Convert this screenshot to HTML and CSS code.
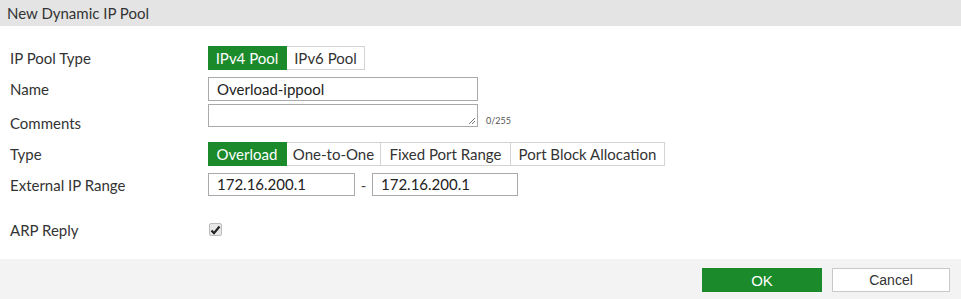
FILE: index.html
```html
<!DOCTYPE html>
<html>
<head>
<meta charset="utf-8">
<link rel="stylesheet" href="styles.css">
</head>
<body>
<div class="dialog">
  <div class="header">New Dynamic IP Pool</div>
  <div class="content">
    <div class="row r1">
      <div class="label">IP Pool Type</div>
      <div class="seg">
        <span class="opt active w79">IPv4 Pool</span><span class="opt w78">IPv6 Pool</span>
      </div>
    </div>
    <div class="row r2">
      <div class="label">Name</div>
      <div class="input wide">Overload-ippool</div>
    </div>
    <div class="row r3">
      <div class="label low">Comments</div>
      <div class="textarea wide">
        <svg class="grip" width="8" height="8" viewBox="0 0 8 8"><path d="M7 1 L1 7 M7 4 L4 7" stroke="#777" stroke-width="1"/></svg>
      </div>
      <span class="count">0/255</span>
    </div>
    <div class="row r4">
      <div class="label">Type</div>
      <div class="seg">
        <span class="opt active w79">Overload</span><span class="opt w94">One-to-One</span><span class="opt w130">Fixed Port Range</span><span class="opt w154">Port Block Allocation</span>
      </div>
    </div>
    <div class="row r5">
      <div class="label">External IP Range</div>
      <div class="input ip1">172.16.200.1</div>
      <span class="dash">-</span>
      <div class="input ip2">172.16.200.1</div>
    </div>
    <div class="row r6">
      <div class="label">ARP Reply</div>
      <div class="check">
        <svg width="11" height="10" viewBox="0 0 11 10"><path d="M1.5 5.5 L4 8.2 L9.5 1.5" fill="none" stroke="#222" stroke-width="2.2"/></svg>
      </div>
    </div>
  </div>
  <div class="footer">
    <button class="btn ok">OK</button>
    <button class="btn cancel">Cancel</button>
  </div>
</div>
</body>
</html>
```
FILE: styles.css
```css
* { box-sizing: border-box; }
html, body { margin: 0; padding: 0; background: #fff; }
body {
  font-family: Lato, "Open Sans", sans-serif;
  font-size: 15px;
  color: #222;
  width: 961px;
  height: 299px;
  overflow: hidden;
}
.dialog { display: flex; flex-direction: column; height: 299px; }
.header {
  height: 26px;
  background: #e4e4e4;
  padding-left: 7px;
  line-height: 26px;
  color: #333;
}
.content {
  flex: 1;
  padding-top: 20px;
}
.row { display: flex; align-items: center; }
.label { width: 208px; padding-left: 10px; color: #333; }
.label.low { margin-top: 14px; }
.r1 { height: 24px; margin-bottom: 7px; }
.r2 { height: 24px; margin-bottom: 3px; }
.r3 { height: 23px; margin-bottom: 15px; }
.r4 { height: 24px; margin-bottom: 7px; }
.r5 { height: 23px; margin-bottom: 27px; }
.r6 { height: 13px; }

.seg { display: flex; height: 24px; }
.opt {
  height: 24px;
  line-height: 22px;
  border: 1px solid #d4d4d4;
  border-left: none;
  text-align: center;
  color: #333;
  background: #fff;
}
.opt.active {
  background: #1b8a2b;
  border-color: #1b8a2b;
  color: #fff;
}
.w79 { width: 79px; }
.w78 { width: 78px; }
.w94 { width: 94px; }
.w130 { width: 130px; }
.w154 { width: 154px; }

.input {
  height: 24px;
  border: 1px solid #aaa;
  padding-left: 8px;
  line-height: 22px;
  color: #222;
}
.wide { width: 270px; }
.r5 .input { height: 23px; line-height: 21px; }
.textarea {
  position: relative;
  height: 23px;
  border: 1px solid #aaa;
}
.grip { position: absolute; right: 1px; bottom: 1px; }
.count { font-size: 9px; color: #555; margin-left: 8px; margin-top: 9px; }
.ip1 { width: 147px; }
.ip2 { width: 146px; }
.dash { width: 17px; text-align: center; color: #444; }
.check {
  width: 13px;
  height: 13px;
  margin-left: 1px;
  border: 1px solid #bbb;
  border-radius: 2px;
  background: #e8e8e8;
  display: flex;
  align-items: center;
  justify-content: center;
}
.footer {
  height: 40px;
  background: #f3f3f3;
  display: flex;
  justify-content: flex-end;
  align-items: flex-start;
  padding-top: 9px;
  padding-right: 11px;
  gap: 10px;
}
.btn {
  height: 24px;
  font-family: "Liberation Sans", Arial, sans-serif;
  font-size: 14px;
  padding: 0;
  border-radius: 0;
}
.ok { width: 120px; background: #1b8a2b; border: 1px solid #1b8a2b; color: #fff; font-size: 15px; }
.cancel { width: 118px; background: #fff; border: 1px solid #c8c8c8; color: #333; }
```
